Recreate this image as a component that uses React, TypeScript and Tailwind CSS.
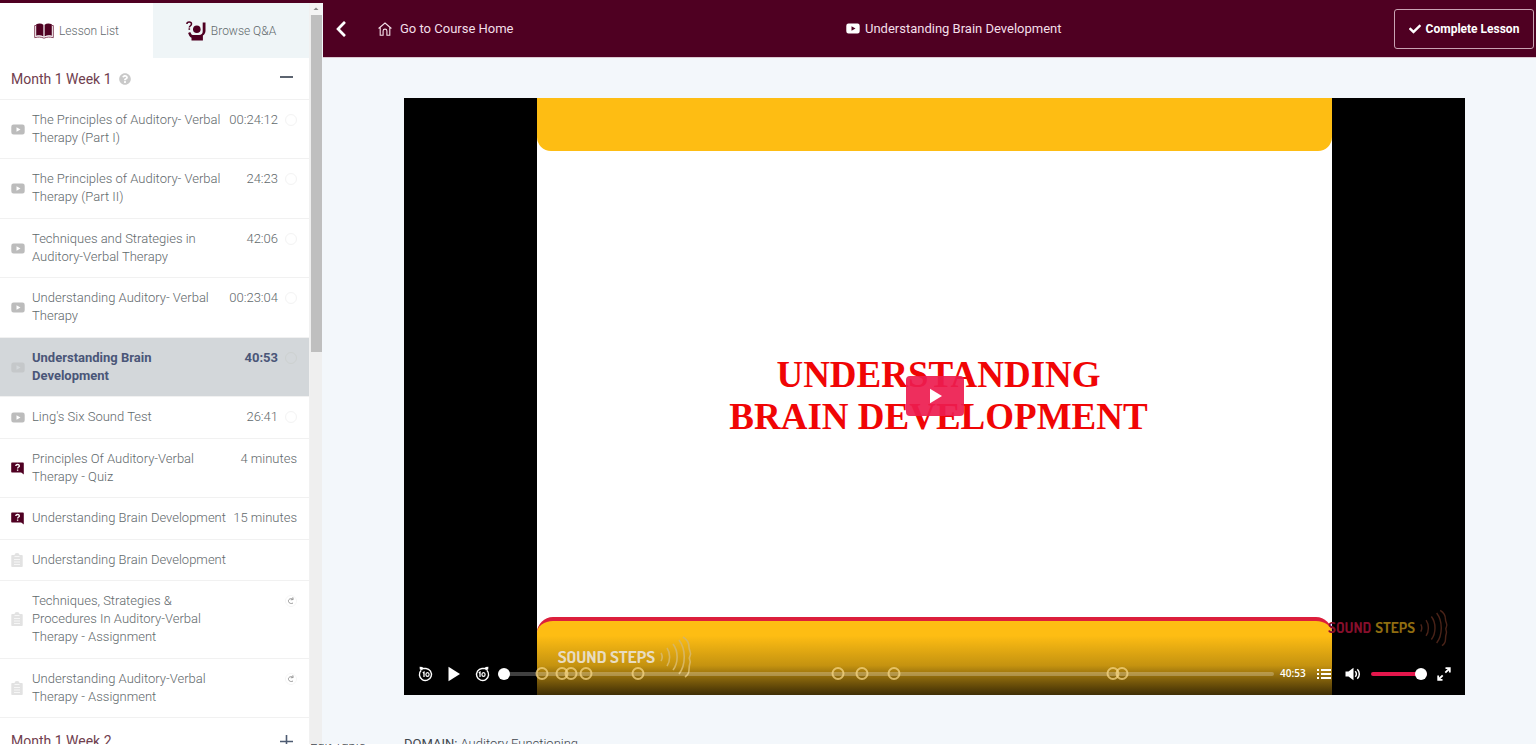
import { FaCheck, FaChevronLeft, FaQuestionCircle } from 'react-icons/fa';

type Kind = 'video' | 'quiz' | 'task';
type Mark = 'ring' | 'pending' | 'none';
type Lesson = { title: string; time?: string; kind: Kind; mark: Mark; active?: boolean };

const lessons: Lesson[] = [
  { title: 'The Principles of Auditory- Verbal Therapy (Part I)', time: '00:24:12', kind: 'video', mark: 'ring' },
  { title: 'The Principles of Auditory- Verbal Therapy (Part II)', time: '24:23', kind: 'video', mark: 'ring' },
  { title: 'Techniques and Strategies in Auditory-Verbal Therapy', time: '42:06', kind: 'video', mark: 'ring' },
  { title: 'Understanding Auditory- Verbal Therapy', time: '00:23:04', kind: 'video', mark: 'ring' },
  { title: 'Understanding Brain Development', time: '40:53', kind: 'video', mark: 'ring', active: true },
  { title: "Ling's Six Sound Test", time: '26:41', kind: 'video', mark: 'ring' },
  { title: 'Principles Of Auditory-Verbal Therapy - Quiz', time: '4 minutes', kind: 'quiz', mark: 'none' },
  { title: 'Understanding Brain Development', time: '15 minutes', kind: 'quiz', mark: 'none' },
  { title: 'Understanding Brain Development', kind: 'task', mark: 'none' },
  { title: 'Techniques, Strategies & Procedures In Auditory-Verbal Therapy - Assignment', kind: 'task', mark: 'pending' },
  { title: 'Understanding Auditory-Verbal Therapy - Assignment', kind: 'task', mark: 'pending' },
];

// Chapter markers, in percent of the timeline
const chapters = [5.7, 8.2, 9.4, 11.3, 18, 43.8, 46.9, 51, 79.2, 80.4];

function VideoIcon({ className }: { className: string }) {
  return (
    <svg viewBox="0 0 14 11" className={className} fill="currentColor" aria-hidden="true">
      <path fillRule="evenodd" d="M2.5 0.5h9A2.2 2.2 0 0 1 13.700 2.700v5.600a2.200 2.200 0 0 1-2.200 2.200h-9A2.200 2.200 0 0 1 .3 8.300V2.700A2.200 2.200 0 0 1 2.500.5ZM5.500 3.200v4.600l4-2.300Z" />
    </svg>
  );
}

function BookIcon() {
  return (
    <svg viewBox="0 0 20 16" className="h-4 w-5" aria-hidden="true">
      <path fill="none" stroke="#8a4a62" strokeWidth="1" d="M2 2.500H.7v12.200c3.500-1 6.500-.8 9.300.5 2.800-1.300 5.800-1.500 9.300-.5V2.500H18" />
      <path fill="#4f0022" d="M2.200 1.200C5 .2 7.600.4 9.400 1.700v11.700c-2.200-1.200-4.600-1.300-7.200-.6ZM17.800 1.200C15 .2 12.400.4 10.600 1.700v11.700c2.200-1.200 4.600-1.300 7.200-.6Z" />
    </svg>
  );
}

function QuizIcon() {
  return (
    <svg viewBox="0 0 13 13" className="h-[13px] w-[13px] text-[#4f0022]" aria-hidden="true">
      <path fill="currentColor" d="M1.200 0.500h10.600c.6 0 1 .4 1 1v11l-2.600-2H1.200c-.6 0-1-.4-1-1v-8c0-.6.4-1 1-1Z" />
      <path fill="none" stroke="#fff" strokeWidth="1.300" d="M4.800 3.900c0-1.900 3.600-1.900 3.600 0 0 1.200-1.800 1.100-1.800 2.500" />
      <path fill="#fff" d="M5.900 7.500h1.400v1.300H5.900z" />
    </svg>
  );
}

function TaskIcon() {
  return (
    <svg viewBox="0 0 12 14" className="h-[14px] w-3 text-[#e2e2e2]" aria-hidden="true">
      <path fill="currentColor" d="M1.300 2H3.500a2.500 2 0 0 1 5 0h2.200c.6 0 1 .4 1 1v10c0 .6-.4 1-1 1H1.300c-.6 0-1-.4-1-1V3c0-.6.4-1 1-1Z" />
      <path stroke="#f6f6f6" strokeWidth="1" d="M3.500 3.500h5M3 6.500h6M3 9h6M3 11.500h6" />
    </svg>
  );
}

function AskIcon() {
  return (
    <svg viewBox="0 0 20 20" className="h-5 w-5 text-[#4f0022]" aria-hidden="true">
      <path fill="none" stroke="currentColor" strokeWidth="1.500" d="M.9 3c0-2.800 4.600-2.800 4.600 0 0 1.800-2.200 1.700-2.200 3.600" />
      <path fill="currentColor" d="M2.500 7.300h1.600v1.500H2.500z" />
      <circle cx="10.800" cy="8.300" r="3.800" fill="currentColor" />
      <path fill="currentColor" d="M16.700 1.500h2.800v8.200c0 2.200-1 3.800-2.600 4.800v5H5.500v-2.800c-1-.3-1.700-.9-2.200-1.900l-1.200-2.900 2.100-.9 1.200 2.300c.3.500.7.700 1.300.7h6.500c2.200 0 3.500-1.200 3.500-3.700Z" />
    </svg>
  );
}

function HomeIcon() {
  return (
    <svg viewBox="0 0 14 14" className="h-[14px] w-[14px]" fill="none" stroke="currentColor" strokeWidth="1.100" aria-hidden="true">
      <path d="M.6 6.500 7 1l6.400 5.500M2.200 5.300v7.900h2.900V9a1.900 1.900 0 0 1 3.800 0v4.200h2.900V5.300" />
    </svg>
  );
}

function SkipIcon({ forward }: { forward?: boolean }) {
  return (
    <svg viewBox="0 0 16 16" className="h-4 w-4" aria-hidden="true">
      <g transform={forward ? 'translate(16 0) scale(-1 1)' : undefined} fill="none" stroke="#fff" strokeWidth="1.400">
        <path d="M3.200 4.200A6 6 0 1 0 8 2.500H3.500" />
        <path fill="#fff" stroke="none" d="M1.600.8 4.700 1 4.500 4.300 1.800 3.600Z" />
      </g>
      <path d="M4.800 6.900 6 6.200v4.700" fill="none" stroke="#fff" strokeWidth="1.300" />
      <ellipse cx="9.500" cy="8.500" rx="1.600" ry="1.900" fill="none" stroke="#fff" strokeWidth="1.200" />
    </svg>
  );
}

function Waves({ className }: { className: string }) {
  return (
    <svg viewBox="0 0 34 42" className={className} fill="none" stroke="currentColor" strokeWidth="1.600" aria-hidden="true">
      <path d="M2 17c1.500 2.500 1.500 5.500 0 8M8 12c3.500 5 3.500 13 0 18M14 8c5.500 7 5.500 19 0 26M20 4c7 9 7 25 0 34" />
      <path d="M24 1c5 3 6 6 6 10s3 6 1 9 1 4 0 7-1 4-1 7-1 5-4 7" />
    </svg>
  );
}

function LessonRow({ lesson }: { lesson: Lesson }) {
  return (
    <li className={`border-b border-[#f1f1f1] pt-[11px] odd:pb-[11px] even:pb-3 ${lesson.active ? 'bg-[#d3d7da]' : ''}`}>
      <a
        href="#lesson"
        className={`flex pl-[11px] pr-3 text-[13px] leading-[18px] ${lesson.active ? 'font-bold text-[#4a5678]' : 'font-light text-[#5f696c]'}`}
      >
        <span className="flex w-[21px] shrink-0 items-center">
          {lesson.kind === 'video' && (
            <VideoIcon className={`h-[11px] w-[14px] ${lesson.active ? 'text-[#c5c8ca]' : 'text-[#bcbcbc]'}`} />
          )}
          {lesson.kind === 'quiz' && <QuizIcon />}
          {lesson.kind === 'task' && <TaskIcon />}
        </span>
        <span className={`min-w-0 flex-1 ${lesson.mark === 'pending' ? 'pr-12' : ''} ${lesson.active ? 'pr-10' : ''}`}>
          {lesson.title}
        </span>
        {lesson.time && <span className="shrink-0 whitespace-nowrap">{lesson.time}</span>}
        {lesson.mark === 'ring' && (
          <span className={`ml-[7px] mt-[3px] h-3 w-3 shrink-0 rounded-full border ${lesson.active ? 'border-[#cdd1d0]' : 'border-[#f3f3f3]'}`} />
        )}
        {lesson.mark === 'pending' && (
          <svg viewBox="0 0 12 12" className="mt-[3px] h-3 w-3 shrink-0" fill="none" aria-hidden="true">
            <circle cx="6" cy="6" r="5.500" stroke="#f6f6f6" />
            <path stroke="#999" d="M7.800 4.200C5.500 2.700 3 4.500 3.500 6.500S6.500 9 8 8M5.800 4.800l2.400-.3-.4-2.200" />
          </svg>
        )}
      </a>
    </li>
  );
}

function Sidebar() {
  return (
    <aside className="flex w-[323px] shrink-0 overflow-hidden border-t-[3px] border-[#4f0022] bg-[#f3f7fb]">
      <div className="min-w-0 flex-1 bg-white">
        <nav className="flex h-[55px] text-xs font-light text-[#5f696c]">
          <a href="#lessons" className="flex w-[153px] items-center justify-center gap-[5px]">
            <BookIcon />
            Lesson List
          </a>
          <a href="#questions" className="flex flex-1 items-center justify-center gap-[5px] bg-[#eff5f7]">
            <AskIcon />
            Browse Q&amp;A
          </a>
        </nav>
        <section>
          <h2 className="flex h-[42px] items-center border-b border-[#f1f1f1] pl-[11px] pr-4 text-sm text-[#70404e]">
            Month 1 Week 1
            <FaQuestionCircle className="ml-[7px] h-3 w-3 text-[#c9c9c9]" />
            <button type="button" aria-label="Collapse Month 1 Week 1" className="ml-auto flex h-5 w-[13px] items-center">
              <span className="mb-1 h-[2px] w-full bg-[#5c6470]" />
            </button>
          </h2>
          <ul>
            {lessons.map((lesson, i) => (
              <LessonRow key={i} lesson={lesson} />
            ))}
          </ul>
        </section>
        <section>
          <h2 className="flex h-[46px] items-center pl-[11px] pr-4 text-sm text-[#70404e]">
            Month 1 Week 2
            <button type="button" aria-label="Expand Month 1 Week 2" className="ml-auto h-5 w-[13px]">
              <svg viewBox="0 0 13 13" className="h-[13px] w-[13px]" stroke="#4d5b72" strokeWidth="1.600" aria-hidden="true">
                <path d="M6.500 0v13M0 6.500h13" />
              </svg>
            </button>
          </h2>
        </section>
      </div>
      <div className="mr-px flex w-[13px] flex-col items-center border-l border-[#f1f1f1] bg-[#efefef]" aria-hidden="true">
        <svg viewBox="0 0 12 12" className="h-3 w-3 shrink-0 bg-[#f4f4f4]">
          <path fill="#8b8b8b" d="m3.500 7 2.500-2.500L8.500 7Z" />
        </svg>
        <span className="h-[337px] w-[11px] bg-[#bfbfbf]" />
      </div>
    </aside>
  );
}

function Slide() {
  return (
    <div className="mx-auto flex h-full w-3/4 flex-col bg-white">
      <div className="h-[53px] rounded-b-[14px] bg-[#febd13]" />
      <h1 className="flex flex-1 flex-col justify-center pl-2 text-center font-['Palatino_Linotype','Liberation_Serif',serif] text-[37px] font-bold leading-[42px] text-[#f00505]">
        <span className="pt-6">UNDERSTANDING</span>
        <span>BRAIN DEVELOPMENT</span>
      </h1>
      <div className="flex h-[78px] rounded-t-[16px] border-t-4 border-[#dc1f3c] bg-linear-to-b from-[#febd13] from-20% via-[#c59310] via-60% to-[#3f2e05] pl-[21px] pt-[15px]">
        <span className="pt-[11px] font-[Dosis,Lato,sans-serif] text-[17px] font-bold leading-5 text-[#e8dcc0]">SOUND STEPS</span>
        <Waves className="ml-1 h-[42px] w-[34px] text-[#d8b660]" />
      </div>
    </div>
  );
}

function Controls() {
  return (
    <div className="absolute inset-x-0 bottom-[11px] flex h-5 items-center pl-[14px] pr-[14px] text-white">
      <button type="button" aria-label="Back 10 seconds">
        <SkipIcon />
      </button>
      <button type="button" aria-label="Play" className="ml-3">
        <svg viewBox="0 0 16 16" className="h-4 w-4" fill="#fff" aria-hidden="true">
          <path d="M2.500.8 14 8 2.500 15.200Z" />
        </svg>
      </button>
      <button type="button" aria-label="Forward 10 seconds" className="ml-3">
        <SkipIcon forward />
      </button>
      <div className="relative ml-2 flex h-5 flex-1 items-center">
        <input
          type="range"
          aria-label="Seek"
          defaultValue={0}
          className="h-1 w-full appearance-none rounded-full bg-white/25 [&::-webkit-slider-thumb]:h-3 [&::-webkit-slider-thumb]:w-3 [&::-webkit-slider-thumb]:appearance-none [&::-webkit-slider-thumb]:rounded-full [&::-webkit-slider-thumb]:bg-white"
        />
        {chapters.map((c) => (
          <span
            key={c}
            className="absolute h-[13px] w-[13px] -translate-x-1/2 rounded-full border-2 border-[#f5d584]/75"
            style={{ left: `${c}%` }}
          />
        ))}
      </div>
      <span className="ml-[6px] w-[27px] font-['Open_Sans',sans-serif] text-[10px] font-semibold">40:53</span>
      <button type="button" aria-label="Chapters" className="ml-[10px]">
        <svg viewBox="0 0 14 12" className="h-3 w-[14px]" stroke="#fff" strokeWidth="1.800" aria-hidden="true">
          <path d="M0 2h2M4 2h10M0 6h2M4 6h10M0 10h2M4 10h10" />
        </svg>
      </button>
      <button type="button" aria-label="Mute" className="ml-[14px]">
        <svg viewBox="0 0 16 14" className="h-[14px] w-4" fill="#fff" aria-hidden="true">
          <path d="M.5 4.500h3L8.500.8v12.400l-5-3.700h-3Z" />
          <path d="M10.200 4.200c1.600 1.600 1.600 4 0 5.600M12.300 2.300c2.700 2.600 2.700 6.800 0 9.400" fill="none" stroke="#fff" strokeWidth="1.500" />
        </svg>
      </button>
      <input
        type="range"
        aria-label="Volume"
        defaultValue={100}
        className="ml-[10px] h-1 w-14 appearance-none rounded-full bg-[#e3174c] [&::-webkit-slider-thumb]:h-3 [&::-webkit-slider-thumb]:w-3 [&::-webkit-slider-thumb]:appearance-none [&::-webkit-slider-thumb]:rounded-full [&::-webkit-slider-thumb]:bg-white"
      />
      <button type="button" aria-label="Full screen" className="ml-[10px]">
        <svg viewBox="0 0 14 14" className="h-[14px] w-[14px]" fill="none" stroke="#fff" strokeWidth="1.800" aria-hidden="true">
          <path d="M8.500 1.200h4.300v4.300M12.500 1.500 8.300 5.700M5.500 12.800H1.200V8.500M1.500 12.500l4.200-4.200" />
        </svg>
      </button>
    </div>
  );
}

function Player() {
  return (
    <div className="relative aspect-video bg-black">
      <Slide />
      <button
        type="button"
        aria-label="Play video"
        className="absolute left-1/2 top-1/2 flex h-10 w-[58px] -translate-x-1/2 -translate-y-1/2 items-center justify-center rounded-[4px] bg-[#ed1c4f]/92"
      >
        <svg viewBox="0 0 14 16" className="ml-[3px] h-4 w-[14px]" fill="#fff" aria-hidden="true">
          <path d="M1 .8 13 8 1 15.200Z" />
        </svg>
      </button>
      <div className="absolute bottom-12 right-4 flex items-center font-[Dosis,Lato,sans-serif] text-[15px] font-bold">
        <span className="text-[#870f2c]">SOUND</span>
        <span className="ml-1 text-[#8f6d10]">STEPS</span>
        <Waves className="ml-1 h-[38px] w-[30px] text-[#4a2318]" />
      </div>
      <Controls />
    </div>
  );
}

export default function App() {
  return (
    <div className="flex h-screen flex-col overflow-hidden bg-white font-[Roboto,sans-serif]">
      <div className="flex min-h-0 flex-1">
        <Sidebar />
        <div className="flex min-w-0 flex-1 flex-col overflow-hidden bg-[#f3f7fb]">
          <header className="flex h-[58px] shrink-0 items-center justify-between border-b border-[#dcc8d0] bg-[#4f0022] pl-3 pr-[2px] text-[13px] text-[#f3dfe8]">
            <div className="flex items-center">
              <button type="button" aria-label="Back">
                <FaChevronLeft className="h-[18px] w-3 text-white" />
              </button>
              <a href="#home" className="ml-[31px] flex items-center gap-2">
                <HomeIcon />
                Go to Course Home
              </a>
            </div>
            <span className="flex items-center gap-[5px]">
              <VideoIcon className="h-[11px] w-[14px] text-white" />
              Understanding Brain Development
            </span>
            <button
              type="button"
              className="flex h-10 w-[140px] items-center justify-center gap-[5px] rounded-[3px] border border-[#c9a3b3] text-xs font-bold text-white"
            >
              <FaCheck className="h-3 w-3" />
              Complete Lesson
            </button>
          </header>
          <main className="pl-[81px] pr-[71px] pt-10">
            <Player />
            <p className="mt-10 text-[13px] font-light leading-[18px] text-[#3f464c]">
              <span className="font-normal">DOMAIN:</span> Auditory Functioning
            </p>
          </main>
        </div>
      </div>
      <footer className="flex h-1 shrink-0 items-end overflow-hidden pl-[310px] text-[13px] leading-[14px] font-light text-[#3f464c]">
        Edit Table
      </footer>
    </div>
  );
}
